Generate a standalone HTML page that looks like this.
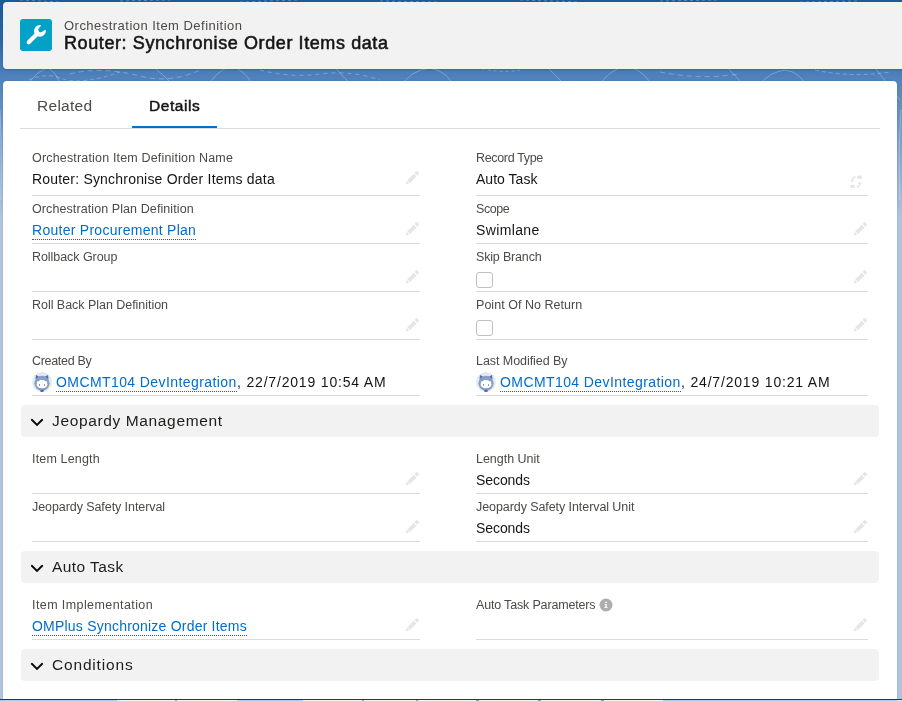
<!DOCTYPE html><html><head><meta charset="utf-8"><style>*{margin:0;padding:0;box-sizing:border-box}
html,body{width:902px;height:701px;overflow:hidden}
body{position:relative;font-family:"Liberation Sans",sans-serif;
background:linear-gradient(to bottom,#1b5a9b 0px,#2d66a6 40px,#5082bc 78px,#78a0cf 140px,#b0c4df 220px,#b0c4df 701px)}
.t{position:absolute;white-space:nowrap;will-change:transform}
.ic{position:absolute;display:block}
.hdr{position:absolute;left:3px;top:2px;width:910px;height:67px;background:#f3f2f2;border-radius:4px;box-shadow:0 1px 2px rgba(0,0,0,.18)}
.icon{position:absolute;left:20px;top:19px;width:32px;height:32px;background:#03a0c8;border-radius:3px}
.icon svg{display:block}
.card{position:absolute;left:3px;top:81px;width:894px;height:640px;background:#fff;border-radius:4px;box-shadow:0 0 2px rgba(0,0,0,.15)}
.tabline{position:absolute;left:20px;top:128px;width:860px;height:1px;background:#dddbda}
.tabsel{position:absolute;left:132px;top:126px;width:85px;height:2px;background:#0070d2}
.b{position:absolute;height:1px;background:#dddbda}
.cb{position:absolute;width:17px;height:16px;border:1px solid #c2c0be;border-radius:3px;background:#fff}
.lk{color:#006dcc;border-bottom:1px dotted #006dcc;padding-bottom:1px}
.sec{position:absolute;left:21px;width:858px;height:32px;background:#f3f2f2;border-radius:4px}
.taskbar{position:absolute;left:0;top:699px;width:902px;height:1px;background:#1f3a52}
.taskbar2{position:absolute;left:0;top:700px;width:902px;height:1px;background:linear-gradient(to right,#a8cfe8 0 117px,#f4f6f8 117px 175px,#8fa3b5 175px 177px,#f4f6f8 177px 237px,#a8cfe8 237px 303px,#f4f6f8 303px 362px,#8fa3b5 362px 364px,#f4f6f8 364px 416px,#8fa3b5 416px 418px,#f4f6f8 418px 476px,#8fa3b5 476px 479px,#f4f6f8 479px 538px,#8fa3b5 538px 541px,#f4f6f8 541px 601px,#8fa3b5 601px 604px,#f4f6f8 604px 663px,#a8cfe8 663px 897px,#dfe8ef 897px 902px)}
</style></head><body>
<svg class="ic" style="left:0;top:0" width="902" height="240" viewBox="0 0 902 240"><g fill="none" stroke="#fff" stroke-opacity="0.28" stroke-width="1"><path d="M10 90 Q40 70 60 78 T120 72" stroke-dasharray="4 3"/><path d="M28 84 Q38 70 48 68 Q56 72 60 84"/><path d="M70 74 Q100 66 140 76 Q170 84 200 70" stroke-dasharray="5 4"/><path d="M150 64 Q165 76 178 90"/><path d="M205 90 Q215 72 230 66 Q245 70 252 84" /><path d="M260 70 Q290 78 320 74 Q350 70 380 80" stroke-dasharray="4 4"/><path d="M330 62 Q345 80 360 92"/><path d="M400 88 Q410 70 430 68 Q450 72 455 90"/><path d="M470 66 Q500 74 520 70" stroke-dasharray="3 3"/><path d="M540 60 Q560 80 575 95"/><path d="M600 84 Q610 70 625 66 Q640 68 650 82"/><path d="M660 72 Q700 80 740 74" stroke-dasharray="5 4"/><path d="M720 60 Q735 75 748 90"/><path d="M760 84 Q770 72 785 70 Q800 72 806 86"/><path d="M815 70 Q850 78 890 72" stroke-dasharray="4 3"/><path d="M870 62 Q885 80 900 100"/><path d="M0 110 Q2 150 1 200"/><path d="M901 110 Q898 150 900 200"/><path d="M20 0 L60 2 M120 1 L170 0 M240 2 L300 0 M380 1 L440 2 M520 0 L580 2 M660 1 L720 0 M800 2 L860 1" stroke-dasharray="3 3"/></g></svg>
<div class="hdr"></div>
<div class="icon"><svg width="32" height="32" viewBox="0 0 32 32"><circle cx="19.9" cy="11.9" r="5.9" fill="#fff"/><path d="M18.1 10.4 L21.1 6.6 L22 3 L29 3 L29 10.6 L25 10.9 L21.6 13.1 Q19.2 14.2 18.1 10.4 Z" fill="#03a0c8"/><line x1="8.7" y1="23.3" x2="17" y2="15" stroke="#fff" stroke-width="4.2" stroke-linecap="round"/></svg></div>
<div class="card"></div>
<div class="tabline"></div><div class="tabsel"></div>
<div class="b" style="left:32px;top:195px;width:388px"></div>
<div class="b" style="left:476px;top:195px;width:392px"></div>
<div class="b" style="left:32px;top:243px;width:388px"></div>
<div class="b" style="left:476px;top:243px;width:392px"></div>
<div class="b" style="left:32px;top:291px;width:388px"></div>
<div class="b" style="left:476px;top:291px;width:392px"></div>
<div class="b" style="left:32px;top:339px;width:388px"></div>
<div class="b" style="left:476px;top:339px;width:392px"></div>
<div class="b" style="left:32px;top:395px;width:388px"></div>
<div class="b" style="left:476px;top:395px;width:392px"></div>
<div class="b" style="left:32px;top:493px;width:388px"></div>
<div class="b" style="left:476px;top:493px;width:392px"></div>
<div class="b" style="left:32px;top:541px;width:388px"></div>
<div class="b" style="left:476px;top:541px;width:392px"></div>
<div class="b" style="left:32px;top:639px;width:388px"></div>
<div class="b" style="left:476px;top:639px;width:392px"></div>
<svg class="ic" style="left:404px;top:170px" width="18" height="18" viewBox="0 0 18 18"><g transform="translate(1.6 14.6) rotate(-45)" fill="#e7e6e5"><polygon points="0,0 3.4,-1.9 3.4,1.9"/><rect x="4.3" y="-1.9" width="9.2" height="3.8"/><rect x="14.4" y="-1.9" width="3.3" height="3.8" rx="0.7"/></g></svg>
<svg class="ic" style="left:404px;top:221px" width="18" height="18" viewBox="0 0 18 18"><g transform="translate(1.6 14.6) rotate(-45)" fill="#e7e6e5"><polygon points="0,0 3.4,-1.9 3.4,1.9"/><rect x="4.3" y="-1.9" width="9.2" height="3.8"/><rect x="14.4" y="-1.9" width="3.3" height="3.8" rx="0.7"/></g></svg>
<svg class="ic" style="left:852px;top:221px" width="18" height="18" viewBox="0 0 18 18"><g transform="translate(1.6 14.6) rotate(-45)" fill="#e7e6e5"><polygon points="0,0 3.4,-1.9 3.4,1.9"/><rect x="4.3" y="-1.9" width="9.2" height="3.8"/><rect x="14.4" y="-1.9" width="3.3" height="3.8" rx="0.7"/></g></svg>
<svg class="ic" style="left:404px;top:269px" width="18" height="18" viewBox="0 0 18 18"><g transform="translate(1.6 14.6) rotate(-45)" fill="#e7e6e5"><polygon points="0,0 3.4,-1.9 3.4,1.9"/><rect x="4.3" y="-1.9" width="9.2" height="3.8"/><rect x="14.4" y="-1.9" width="3.3" height="3.8" rx="0.7"/></g></svg>
<svg class="ic" style="left:852px;top:269px" width="18" height="18" viewBox="0 0 18 18"><g transform="translate(1.6 14.6) rotate(-45)" fill="#e7e6e5"><polygon points="0,0 3.4,-1.9 3.4,1.9"/><rect x="4.3" y="-1.9" width="9.2" height="3.8"/><rect x="14.4" y="-1.9" width="3.3" height="3.8" rx="0.7"/></g></svg>
<svg class="ic" style="left:404px;top:317px" width="18" height="18" viewBox="0 0 18 18"><g transform="translate(1.6 14.6) rotate(-45)" fill="#e7e6e5"><polygon points="0,0 3.4,-1.9 3.4,1.9"/><rect x="4.3" y="-1.9" width="9.2" height="3.8"/><rect x="14.4" y="-1.9" width="3.3" height="3.8" rx="0.7"/></g></svg>
<svg class="ic" style="left:852px;top:317px" width="18" height="18" viewBox="0 0 18 18"><g transform="translate(1.6 14.6) rotate(-45)" fill="#e7e6e5"><polygon points="0,0 3.4,-1.9 3.4,1.9"/><rect x="4.3" y="-1.9" width="9.2" height="3.8"/><rect x="14.4" y="-1.9" width="3.3" height="3.8" rx="0.7"/></g></svg>
<svg class="ic" style="left:404px;top:471px" width="18" height="18" viewBox="0 0 18 18"><g transform="translate(1.6 14.6) rotate(-45)" fill="#e7e6e5"><polygon points="0,0 3.4,-1.9 3.4,1.9"/><rect x="4.3" y="-1.9" width="9.2" height="3.8"/><rect x="14.4" y="-1.9" width="3.3" height="3.8" rx="0.7"/></g></svg>
<svg class="ic" style="left:852px;top:471px" width="18" height="18" viewBox="0 0 18 18"><g transform="translate(1.6 14.6) rotate(-45)" fill="#e7e6e5"><polygon points="0,0 3.4,-1.9 3.4,1.9"/><rect x="4.3" y="-1.9" width="9.2" height="3.8"/><rect x="14.4" y="-1.9" width="3.3" height="3.8" rx="0.7"/></g></svg>
<svg class="ic" style="left:404px;top:519px" width="18" height="18" viewBox="0 0 18 18"><g transform="translate(1.6 14.6) rotate(-45)" fill="#e7e6e5"><polygon points="0,0 3.4,-1.9 3.4,1.9"/><rect x="4.3" y="-1.9" width="9.2" height="3.8"/><rect x="14.4" y="-1.9" width="3.3" height="3.8" rx="0.7"/></g></svg>
<svg class="ic" style="left:852px;top:519px" width="18" height="18" viewBox="0 0 18 18"><g transform="translate(1.6 14.6) rotate(-45)" fill="#e7e6e5"><polygon points="0,0 3.4,-1.9 3.4,1.9"/><rect x="4.3" y="-1.9" width="9.2" height="3.8"/><rect x="14.4" y="-1.9" width="3.3" height="3.8" rx="0.7"/></g></svg>
<svg class="ic" style="left:404px;top:617px" width="18" height="18" viewBox="0 0 18 18"><g transform="translate(1.6 14.6) rotate(-45)" fill="#e7e6e5"><polygon points="0,0 3.4,-1.9 3.4,1.9"/><rect x="4.3" y="-1.9" width="9.2" height="3.8"/><rect x="14.4" y="-1.9" width="3.3" height="3.8" rx="0.7"/></g></svg>
<svg class="ic" style="left:852px;top:617px" width="18" height="18" viewBox="0 0 18 18"><g transform="translate(1.6 14.6) rotate(-45)" fill="#e7e6e5"><polygon points="0,0 3.4,-1.9 3.4,1.9"/><rect x="4.3" y="-1.9" width="9.2" height="3.8"/><rect x="14.4" y="-1.9" width="3.3" height="3.8" rx="0.7"/></g></svg>
<svg class="ic" style="left:849px;top:175px" width="14" height="14" viewBox="0 0 14 14"><g fill="#e6e5e4"><rect x="8.3" y="0.6" width="4.4" height="3.2"/><rect x="1.2" y="9.8" width="4.4" height="3.2"/></g><g fill="none" stroke="#e6e5e4" stroke-width="1.4"><path d="M6.5 1.8 Q3.2 2.4 3.2 5.6"/><path d="M7.4 12.2 Q10.8 11.6 10.8 8.4"/></g><g fill="#e6e5e4"><polygon points="1.2,5 5.2,5 3.2,7.4"/><polygon points="8.8,9 12.8,9 10.8,6.6"/></g></svg>
<div class="cb" style="left:476px;top:272px"></div>
<div class="cb" style="left:476px;top:320px"></div>
<svg class="ic" style="left:32px;top:372px" width="20" height="20" viewBox="0 0 20 20"><circle cx="10" cy="10" r="10" fill="#e4e9f1"/><ellipse cx="10" cy="11.2" rx="7.6" ry="7.4" fill="#899ec5"/><polygon points="3.5,7.2 4,2.9 6.9,4.6" fill="#526c9c"/><polygon points="16.5,7.2 16,2.9 13.1,4.6" fill="#526c9c"/><ellipse cx="10" cy="12.6" rx="5.4" ry="3.7" fill="#fff"/><circle cx="6.6" cy="10.6" r="1.7" fill="#fff"/><circle cx="8.9" cy="9.5" r="1.7" fill="#fff"/><circle cx="11.3" cy="9.6" r="1.6" fill="#fff"/><circle cx="13.5" cy="10.6" r="1.7" fill="#fff"/><rect x="7" y="12.1" width="1" height="1.6" fill="#7384a3"/><rect x="12" y="12.3" width="1" height="1.6" fill="#7384a3"/><ellipse cx="10" cy="18.9" rx="1.9" ry="1.1" fill="#4f6998"/></svg>
<svg class="ic" style="left:476px;top:372px" width="20" height="20" viewBox="0 0 20 20"><circle cx="10" cy="10" r="10" fill="#e4e9f1"/><ellipse cx="10" cy="11.2" rx="7.6" ry="7.4" fill="#899ec5"/><polygon points="3.5,7.2 4,2.9 6.9,4.6" fill="#526c9c"/><polygon points="16.5,7.2 16,2.9 13.1,4.6" fill="#526c9c"/><ellipse cx="10" cy="12.6" rx="5.4" ry="3.7" fill="#fff"/><circle cx="6.6" cy="10.6" r="1.7" fill="#fff"/><circle cx="8.9" cy="9.5" r="1.7" fill="#fff"/><circle cx="11.3" cy="9.6" r="1.6" fill="#fff"/><circle cx="13.5" cy="10.6" r="1.7" fill="#fff"/><rect x="7" y="12.1" width="1" height="1.6" fill="#7384a3"/><rect x="12" y="12.3" width="1" height="1.6" fill="#7384a3"/><ellipse cx="10" cy="18.9" rx="1.9" ry="1.1" fill="#4f6998"/></svg>
<div class="sec" style="top:405px"></div><svg class="ic" style="left:30px;top:418px" width="14" height="9" viewBox="0 0 14 9"><polyline points="1.8,1.8 7,6.9 12.2,1.8" fill="none" stroke="#080707" stroke-width="1.9" stroke-linejoin="miter" stroke-linecap="round"/></svg>
<div class="sec" style="top:551px"></div><svg class="ic" style="left:30px;top:564px" width="14" height="9" viewBox="0 0 14 9"><polyline points="1.8,1.8 7,6.9 12.2,1.8" fill="none" stroke="#080707" stroke-width="1.9" stroke-linejoin="miter" stroke-linecap="round"/></svg>
<div class="sec" style="top:649px"></div><svg class="ic" style="left:30px;top:662px" width="14" height="9" viewBox="0 0 14 9"><polyline points="1.8,1.8 7,6.9 12.2,1.8" fill="none" stroke="#080707" stroke-width="1.9" stroke-linejoin="miter" stroke-linecap="round"/></svg>
<svg class="ic" style="left:599px;top:598px" width="14" height="14" viewBox="0 0 14 14"><circle cx="7" cy="7" r="6.5" fill="#b0adab"/><rect x="6.2" y="3.8" width="1.6" height="1.3" fill="#fff"/><rect x="6.3" y="6" width="1.4" height="3.9" fill="#fff"/><rect x="5.5" y="9.1" width="3" height="0.9" fill="#fff"/><rect x="5.6" y="6" width="1.5" height="0.8" fill="#fff"/></svg>
<div class="t" style="left:64px;top:19.00px;font-size:13px;line-height:13px;color:#4c4a48;font-weight:normal;letter-spacing:0.471px">Orchestration Item Definition</div>
<div class="t" style="left:64px;top:33.76px;font-size:18px;line-height:18px;color:#161515;font-weight:normal;letter-spacing:0.595px;-webkit-text-stroke:0.55px #161515">Router: Synchronise Order Items data</div>
<div class="t" style="left:37px;top:97.88px;font-size:15.5px;line-height:15.5px;color:#4c4a48;font-weight:normal;letter-spacing:0.283px">Related</div>
<div class="t" style="left:149px;top:97.88px;font-size:15.5px;line-height:15.5px;color:#161515;font-weight:normal;letter-spacing:0.562px;-webkit-text-stroke:0.5px #161515">Details</div>
<div class="t" style="left:32px;top:152.42px;font-size:12.5px;line-height:12.5px;color:#4c4a48;font-weight:normal;letter-spacing:0.171px">Orchestration Item Definition Name</div>
<div class="t" style="left:32px;top:172.15px;font-size:14px;line-height:14px;color:#161515;font-weight:normal;letter-spacing:0.198px">Router: Synchronise Order Items data</div>
<div class="t" style="left:476px;top:152.42px;font-size:12.5px;line-height:12.5px;color:#4c4a48;font-weight:normal;letter-spacing:-0.342px">Record Type</div>
<div class="t" style="left:476px;top:172.15px;font-size:14px;line-height:14px;color:#161515;font-weight:normal;letter-spacing:0.028px">Auto Task</div>
<div class="t" style="left:32px;top:203.42px;font-size:12.5px;line-height:12.5px;color:#4c4a48;font-weight:normal;letter-spacing:0.091px">Orchestration Plan Definition</div>
<div class="t" style="left:32px;top:223.15px;font-size:14px;line-height:14px;color:#006dcc;font-weight:normal;letter-spacing:0.269px"><span class="lk">Router Procurement Plan</span></div>
<div class="t" style="left:476px;top:203.42px;font-size:12.5px;line-height:12.5px;color:#4c4a48;font-weight:normal;letter-spacing:-0.448px">Scope</div>
<div class="t" style="left:476px;top:223.15px;font-size:14px;line-height:14px;color:#161515;font-weight:normal;letter-spacing:0.371px">Swimlane</div>
<div class="t" style="left:32px;top:251.42px;font-size:12.5px;line-height:12.5px;color:#4c4a48;font-weight:normal;letter-spacing:-0.054px">Rollback Group</div>
<div class="t" style="left:476px;top:251.42px;font-size:12.5px;line-height:12.5px;color:#4c4a48;font-weight:normal;letter-spacing:-0.174px">Skip Branch</div>
<div class="t" style="left:32px;top:299.42px;font-size:12.5px;line-height:12.5px;color:#4c4a48;font-weight:normal;letter-spacing:-0.034px">Roll Back Plan Definition</div>
<div class="t" style="left:476px;top:299.42px;font-size:12.5px;line-height:12.5px;color:#4c4a48;font-weight:normal;letter-spacing:0.038px">Point Of No Return</div>
<div class="t" style="left:32px;top:355.42px;font-size:12.5px;line-height:12.5px;color:#4c4a48;font-weight:normal;letter-spacing:-0.309px">Created By</div>
<div class="t" style="left:56px;top:375.15px;font-size:14px;line-height:14px;color:#006dcc;font-weight:normal;letter-spacing:0.414px"><span class="lk">OMCMT104 DevIntegration</span></div>
<div class="t" style="left:236.5px;top:375.15px;font-size:14px;line-height:14px;color:#161515;font-weight:normal;letter-spacing:0.820px">, 22/7/2019 10:54 AM</div>
<div class="t" style="left:476px;top:355.42px;font-size:12.5px;line-height:12.5px;color:#4c4a48;font-weight:normal;letter-spacing:-0.057px">Last Modified By</div>
<div class="t" style="left:500px;top:375.15px;font-size:14px;line-height:14px;color:#006dcc;font-weight:normal;letter-spacing:0.414px"><span class="lk">OMCMT104 DevIntegration</span></div>
<div class="t" style="left:680.5px;top:375.15px;font-size:14px;line-height:14px;color:#161515;font-weight:normal;letter-spacing:0.820px">, 24/7/2019 10:21 AM</div>
<div class="t" style="left:52px;top:412.88px;font-size:15.5px;line-height:15.5px;color:#1e1d1c;font-weight:normal;letter-spacing:0.637px">Jeopardy Management</div>
<div class="t" style="left:32px;top:453.42px;font-size:12.5px;line-height:12.5px;color:#4c4a48;font-weight:normal;letter-spacing:0.164px">Item Length</div>
<div class="t" style="left:476px;top:453.42px;font-size:12.5px;line-height:12.5px;color:#4c4a48;font-weight:normal;letter-spacing:-0.016px">Length Unit</div>
<div class="t" style="left:476px;top:473.15px;font-size:14px;line-height:14px;color:#161515;font-weight:normal;letter-spacing:-0.080px">Seconds</div>
<div class="t" style="left:32px;top:501.42px;font-size:12.5px;line-height:12.5px;color:#4c4a48;font-weight:normal;letter-spacing:-0.075px">Jeopardy Safety Interval</div>
<div class="t" style="left:476px;top:501.42px;font-size:12.5px;line-height:12.5px;color:#4c4a48;font-weight:normal;letter-spacing:-0.076px">Jeopardy Safety Interval Unit</div>
<div class="t" style="left:476px;top:521.15px;font-size:14px;line-height:14px;color:#161515;font-weight:normal;letter-spacing:-0.080px">Seconds</div>
<div class="t" style="left:52px;top:558.88px;font-size:15.5px;line-height:15.5px;color:#1e1d1c;font-weight:normal;letter-spacing:0.423px">Auto Task</div>
<div class="t" style="left:32px;top:599.42px;font-size:12.5px;line-height:12.5px;color:#4c4a48;font-weight:normal;letter-spacing:0.412px">Item Implementation</div>
<div class="t" style="left:32px;top:619.15px;font-size:14px;line-height:14px;color:#006dcc;font-weight:normal;letter-spacing:0.213px"><span class="lk">OMPlus Synchronize Order Items</span></div>
<div class="t" style="left:476px;top:599.42px;font-size:12.5px;line-height:12.5px;color:#4c4a48;font-weight:normal;letter-spacing:-0.169px">Auto Task Parameters</div>
<div class="t" style="left:52px;top:656.88px;font-size:15.5px;line-height:15.5px;color:#1e1d1c;font-weight:normal;letter-spacing:0.823px">Conditions</div>
<div class="taskbar"></div><div class="taskbar2"></div>
</body></html>
